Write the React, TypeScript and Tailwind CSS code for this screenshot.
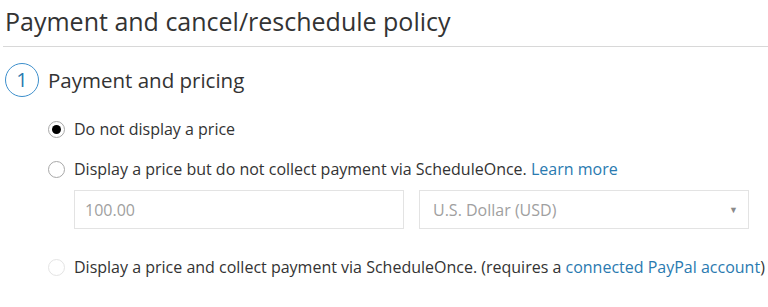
import { ReactNode } from "react";

function Radio({
  checked,
  disabled,
  children,
}: {
  checked?: boolean;
  disabled?: boolean;
  children: ReactNode;
}) {
  return (
    <label className="flex items-center gap-[9px]">
      <span
        className={`flex h-[17px] w-[17px] shrink-0 items-center justify-center rounded-full border bg-white ${
          disabled ? "border-[#e4e4e4]" : "border-[#a8a8a8]"
        }`}
      >
        {checked && <span className="h-[9px] w-[9px] rounded-full bg-black" />}
      </span>
      <span className="whitespace-nowrap">{children}</span>
    </label>
  );
}

export default function App() {
  return (
    <div
      className="h-[307px] w-[768px] overflow-hidden bg-white text-[#333333]"
      style={{ fontFamily: '"Open Sans", sans-serif' }}
    >
      <h1 className="pl-[5px] pt-[4px] text-[25px] leading-[34px]">
        Payment and cancel/reschedule policy
      </h1>
      <div className="ml-[3px] mt-[8px] h-px bg-[#d8d8d8]" />

      <div className="mt-[16px] flex items-center gap-[9px] pl-[5px]">
        <span className="flex h-[34px] w-[34px] items-center justify-center rounded-full border-[1.5px] border-[#3d8fcc] text-[20px] text-[#2a7ab0]">
          1
        </span>
        <span className="text-[20.5px]">Payment and pricing</span>
      </div>

      <div className="pl-[48px] text-[16px] leading-[20px]">
        <div className="mt-[22px]">
          <Radio checked>Do not display a price</Radio>
        </div>
        <div className="mt-[20px]">
          <Radio>
            Display a price but do not collect payment via ScheduleOnce.{" "}
            <a className="text-[#2a7ab0]">Learn more</a>
          </Radio>
        </div>
        <div className="mt-[11px] flex gap-[15px] pl-[26px]">
          <div className="flex h-[39px] w-[330px] items-center border border-[#e3e3e3] px-[10px] text-[#a0a0a0]">
            100.00
          </div>
          <div className="flex h-[39px] w-[330px] items-center justify-between border border-[#e3e3e3] pl-[13px] pr-[10px] text-[#a0a0a0]">
            <span>U.S. Dollar (USD)</span>
            <span className="text-[9px] text-[#8a8a8a]">▼</span>
          </div>
        </div>
        <div className="mt-[28px]">
          <Radio disabled>
            Display a price and collect payment via ScheduleOnce. (requires a{" "}
            <a className="text-[#2a7ab0]">connected PayPal account</a>)
          </Radio>
        </div>
      </div>
    </div>
  );
}
